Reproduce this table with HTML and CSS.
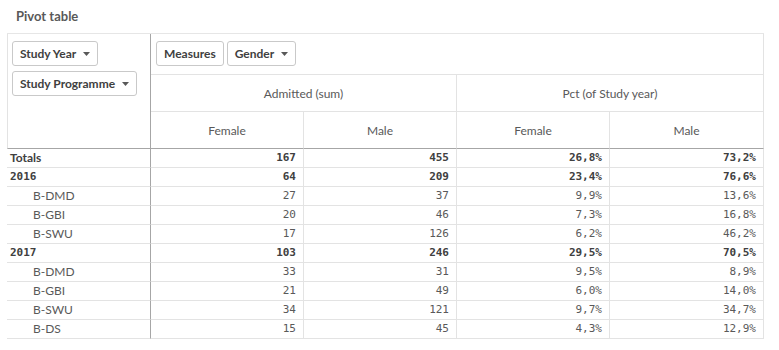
FILE: index.html
```html
<!DOCTYPE html>
<html>
<head>
<meta charset="utf-8">
<link rel="stylesheet" href="styles.css">
</head>
<body>
<div class="title">Pivot table</div>
<div class="pivot">
  <div class="cell corner">
    <button class="chip">Study Year <svg class="caret" width="7" height="4" viewBox="0 0 7 4"><path d="M0 0H7L3.5 4Z"/></svg></button>
    <button class="chip">Study Programme <svg class="caret" width="7" height="4" viewBox="0 0 7 4"><path d="M0 0H7L3.5 4Z"/></svg></button>
  </div>
  <div class="cell colbar">
    <button class="chip">Measures</button>
    <button class="chip">Gender <svg class="caret" width="7" height="4" viewBox="0 0 7 4"><path d="M0 0H7L3.5 4Z"/></svg></button>
  </div>
  <div class="cell head span2">Admitted (sum)</div>
  <div class="cell head span2">Pct (of Study year)</div>
  <div class="cell head sub">Female</div>
  <div class="cell head sub">Male</div>
  <div class="cell head sub">Female</div>
  <div class="cell head sub">Male</div>

  <div class="cell label bold">Totals</div>
  <div class="cell num bold">167</div><div class="cell num bold">455</div><div class="cell num bold">26,8%</div><div class="cell num bold">73,2%</div>

  <div class="cell label bold mono">2016</div>
  <div class="cell num bold">64</div><div class="cell num bold">209</div><div class="cell num bold">23,4%</div><div class="cell num bold">76,6%</div>
  <div class="cell label sub-row">B-DMD</div>
  <div class="cell num">27</div><div class="cell num">37</div><div class="cell num">9,9%</div><div class="cell num">13,6%</div>
  <div class="cell label sub-row">B-GBI</div>
  <div class="cell num">20</div><div class="cell num">46</div><div class="cell num">7,3%</div><div class="cell num">16,8%</div>
  <div class="cell label sub-row">B-SWU</div>
  <div class="cell num">17</div><div class="cell num">126</div><div class="cell num">6,2%</div><div class="cell num">46,2%</div>

  <div class="cell label bold mono">2017</div>
  <div class="cell num bold">103</div><div class="cell num bold">246</div><div class="cell num bold">29,5%</div><div class="cell num bold">70,5%</div>
  <div class="cell label sub-row">B-DMD</div>
  <div class="cell num">33</div><div class="cell num">31</div><div class="cell num">9,5%</div><div class="cell num">8,9%</div>
  <div class="cell label sub-row">B-GBI</div>
  <div class="cell num">21</div><div class="cell num">49</div><div class="cell num">6,0%</div><div class="cell num">14,0%</div>
  <div class="cell label sub-row">B-SWU</div>
  <div class="cell num">34</div><div class="cell num">121</div><div class="cell num">9,7%</div><div class="cell num">34,7%</div>
  <div class="cell label sub-row">B-DS</div>
  <div class="cell num">15</div><div class="cell num">45</div><div class="cell num">4,3%</div><div class="cell num">12,9%</div>
</div>
</body>
</html>
```

FILE: styles.css
```css
* { box-sizing: border-box; }
html, body { margin: 0; padding: 0; background: #fff; }
body {
  font-family: Lato, "Open Sans", sans-serif;
  font-size: 12px;
  color: #595959;
}
.title {
  height: 33px;
  padding: 8px 0 0 16px;
  font-size: 13px;
  font-weight: bold;
  line-height: 16px;
  color: #595959;
}
.pivot {
  margin-left: 7px;
  width: 757px;
  display: grid;
  grid-template-columns: 144px 153px 153px 153px 154px;
  grid-template-rows: 41px 37px 37px repeat(10, 19px);
  border-top: 1px solid #e6e6e6;
}
.cell {
  border-right: 1px solid #e3e3e3;
  border-bottom: 1px solid #e3e3e3;
  white-space: nowrap;
}
.corner {
  grid-row: span 3;
  border-left: 1px solid #e3e3e3;
  border-right: 1px solid #a6a6a6;
  border-bottom: 1px solid #a6a6a6;
  padding: 7px 0 0 4px;
  display: flex;
  flex-direction: column;
  align-items: flex-start;
  gap: 5px;
}
.colbar {
  grid-column: span 4;
  padding: 7px 0 0 5px;
  display: flex;
  align-items: flex-start;
  gap: 3px;
}
.chip {
  height: 25px;
  padding: 0 7px 0 7px;
  border: 1px solid #c9c9c9;
  border-radius: 3px;
  background: #fff;
  font-family: Lato, "Open Sans", sans-serif;
  font-size: 12px;
  font-weight: bold;
  color: #404040;
  display: flex;
  align-items: center;
  gap: 7px;
}
.caret { fill: #595959; }
.head {
  display: flex;
  align-items: center;
  justify-content: center;
}
.span2 { grid-column: span 2; }
.sub { border-bottom-color: #a6a6a6; }
.label {
  border-right-color: #a6a6a6;
  padding-left: 3px;
  line-height: 18px;
}
.sub-row { padding-left: 26px; }
.num {
  font-family: "DejaVu Sans Mono", monospace;
  font-size: 11px;
  text-align: right;
  padding-right: 7px;
  line-height: 18px;
}
.bold { font-weight: bold; color: #404040; }
.mono { font-family: "DejaVu Sans Mono", monospace; font-size: 11px; }
```
